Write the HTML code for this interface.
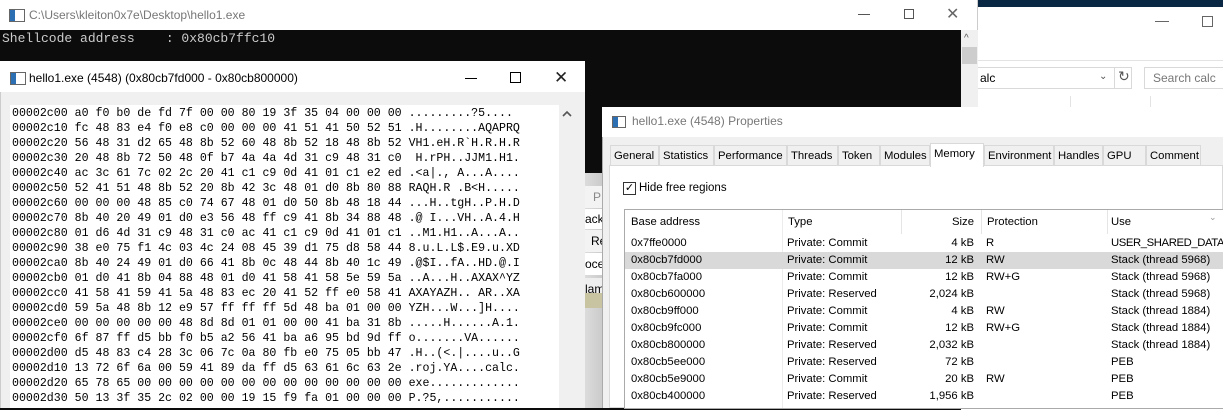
<!DOCTYPE html>
<html><head><meta charset="utf-8"><style>
*{margin:0;padding:0;box-sizing:border-box}
body{width:1223px;height:408px;overflow:hidden;position:relative;background:#fff;font-family:"Liberation Sans",sans-serif;font-size:12px}
.a{position:absolute}
.ico{position:absolute;width:16px;height:13px;border:1px solid #666;background:linear-gradient(90deg,#2c6fb3 0 5px,#fff 5px)}
.mono{font-family:"Liberation Mono",monospace}
pre{font-family:"Liberation Mono",monospace;font-size:11.6px;line-height:15px;color:#000}
.tab{position:absolute;top:145px;height:21px;border:1px solid #d9d9d9;border-bottom:none;background:#f0f0f0;font-size:11.3px;line-height:20px;padding-left:3px;color:#000;white-space:nowrap;overflow:hidden}
.row{position:absolute;left:625px;width:600px;height:17px;line-height:17px;font-size:11.3px;white-space:nowrap}
.row span{position:absolute}
</style></head><body>
<!-- explorer behind -->
<div class="a" style="left:978px;top:0;width:245px;height:7px;background:#0a2744"></div>
<div class="a" style="left:1155px;top:21px;width:14px;height:1px;background:#666"></div>
<div class="a" style="left:1202px;top:16px;width:11px;height:11px;border:1px solid #666"></div>
<div class="a" style="left:978px;top:60px;width:245px;height:1px;background:#e3e3e3"></div>
<div class="a" style="left:975px;top:67px;width:157px;height:22px;border:1px solid #d9d9d9;font-size:12px;line-height:20px;padding-left:4px">alc</div>
<div class="a" style="left:1099px;top:71px;color:#555;font-size:10px">&#8964;</div>
<div class="a" style="left:1114px;top:67px;width:1px;height:22px;background:#d9d9d9"></div>
<div class="a" style="left:1118px;top:68px;color:#555;font-size:14px">&#8635;</div>
<div class="a" style="left:1144px;top:67px;width:85px;height:22px;border:1px solid #d9d9d9;color:#777;font-size:12px;line-height:20px;padding-left:8px">Search calc</div>
<div class="a" style="left:1070px;top:96px;width:1px;height:12px;background:#e3e3e3"></div>
<div class="a" style="left:1150px;top:96px;width:1px;height:12px;background:#e3e3e3"></div>
<!-- console -->
<div class="a" style="left:0;top:0;width:978px;height:30px;background:#fff;border-right:1px solid #ccc"></div>
<div class="ico" style="left:9px;top:9px"></div>
<div class="a" style="left:29px;top:8px;color:#777;font-size:12px">C:\Users\kleiton0x7e\Desktop\hello1.exe</div>
<div class="a" style="left:858px;top:14px;width:12px;height:1px;background:#555"></div>
<div class="a" style="left:904px;top:9px;width:10px;height:10px;border:1px solid #555"></div>
<div class="a" style="left:946px;top:4px;color:#666;font-size:16px">&#10005;</div>
<div class="a" style="left:0;top:30px;width:961px;height:380px;background:#0c0c0c"></div>
<div class="a" style="left:961px;top:30px;width:17px;height:78px;background:#f0f0f0"></div>
<div class="a" style="left:964px;top:33px;color:#555;font-size:10px">^</div>
<div class="a" style="left:962px;top:47px;width:15px;height:17px;background:#cdcdcd"></div>
<div class="a mono" style="left:2px;top:31px;color:#ccc;font-size:13px;white-space:pre">Shellcode address    : 0x80cb7ffc10</div>
<!-- fragment behind -->
<div class="a" style="left:585px;top:173px;width:20px;height:235px;background:linear-gradient(90deg,#dcdcdc,#c8c8c8)"></div>
<div class="a" style="left:585px;top:186px;width:20px;height:22px;background:#f3f3f3;font-size:12px;color:#888;padding-left:8px;line-height:22px">P</div>
<div class="a" style="left:585px;top:209px;width:20px;height:20px;background:#fff;font-size:12px;line-height:20px">ack</div>
<div class="a" style="left:585px;top:230px;width:20px;height:22px;background:#f3f3f3;font-size:12px;padding-left:6px;line-height:22px">Re</div>
<div class="a" style="left:585px;top:253px;width:20px;height:22px;background:#fff;font-size:12px;line-height:22px">oce</div>
<div class="a" style="left:585px;top:278px;width:20px;height:22px;background:#eee;font-size:12px;line-height:22px">lam</div>
<div class="a" style="left:585px;top:293px;width:20px;height:15px;background:#c8c3a0"></div>
<!-- hex window -->
<div class="a" style="left:0;top:61px;width:585px;height:347px;background:#f0f0f0;border-left:1px solid #ccc"></div>
<div class="a" style="left:0;top:61px;width:585px;height:31px;background:#fff"></div>
<div class="ico" style="left:10px;top:72px"></div>
<div class="a" style="left:29px;top:71px;font-size:12px">hello1.exe (4548) (0x80cb7fd000 - 0x80cb800000)</div>
<div class="a" style="left:465px;top:78px;width:12px;height:1px;background:#000"></div>
<div class="a" style="left:510px;top:72px;width:11px;height:11px;border:1px solid #000"></div>
<div class="a" style="left:554px;top:68px;font-size:17px;color:#222">&#10005;</div>
<div class="a" style="left:10px;top:105px;width:549px;height:303px;background:#fff"></div>
<svg class="a" style="left:562px;top:110px" width="10" height="8"><path d="M1 6 L5 2 L9 6" fill="none" stroke="#555" stroke-width="1.6"/></svg>
<pre class="a" style="left:12px;top:106px">00002c00 a0 f0 b0 de fd 7f 00 00 80 19 3f 35 04 00 00 00 .........?5....
00002c10 fc 48 83 e4 f0 e8 c0 00 00 00 41 51 41 50 52 51 .H........AQAPRQ
00002c20 56 48 31 d2 65 48 8b 52 60 48 8b 52 18 48 8b 52 VH1.eH.R`H.R.H.R
00002c30 20 48 8b 72 50 48 0f b7 4a 4a 4d 31 c9 48 31 c0  H.rPH..JJM1.H1.
00002c40 ac 3c 61 7c 02 2c 20 41 c1 c9 0d 41 01 c1 e2 ed .&lt;a|., A...A....
00002c50 52 41 51 48 8b 52 20 8b 42 3c 48 01 d0 8b 80 88 RAQH.R .B&lt;H.....
00002c60 00 00 00 48 85 c0 74 67 48 01 d0 50 8b 48 18 44 ...H..tgH..P.H.D
00002c70 8b 40 20 49 01 d0 e3 56 48 ff c9 41 8b 34 88 48 .@ I...VH..A.4.H
00002c80 01 d6 4d 31 c9 48 31 c0 ac 41 c1 c9 0d 41 01 c1 ..M1.H1..A...A..
00002c90 38 e0 75 f1 4c 03 4c 24 08 45 39 d1 75 d8 58 44 8.u.L.L$.E9.u.XD
00002ca0 8b 40 24 49 01 d0 66 41 8b 0c 48 44 8b 40 1c 49 .@$I..fA..HD.@.I
00002cb0 01 d0 41 8b 04 88 48 01 d0 41 58 41 58 5e 59 5a ..A...H..AXAX^YZ
00002cc0 41 58 41 59 41 5a 48 83 ec 20 41 52 ff e0 58 41 AXAYAZH.. AR..XA
00002cd0 59 5a 48 8b 12 e9 57 ff ff ff 5d 48 ba 01 00 00 YZH...W...]H....
00002ce0 00 00 00 00 00 48 8d 8d 01 01 00 00 41 ba 31 8b .....H......A.1.
00002cf0 6f 87 ff d5 bb f0 b5 a2 56 41 ba a6 95 bd 9d ff o.......VA......
00002d00 d5 48 83 c4 28 3c 06 7c 0a 80 fb e0 75 05 bb 47 .H..(&lt;.|....u..G
00002d10 13 72 6f 6a 00 59 41 89 da ff d5 63 61 6c 63 2e .roj.YA....calc.
00002d20 65 78 65 00 00 00 00 00 00 00 00 00 00 00 00 00 exe.............
00002d30 50 13 3f 35 2c 02 00 00 19 15 f9 fa 01 00 00 00 P.?5,...........</pre>
<!-- properties -->
<div class="a" style="left:602px;top:107px;width:621px;height:301px;background:#f0f0f0;border-left:1px solid #aaa"></div>
<div class="a" style="left:602px;top:107px;width:621px;height:30px;background:#fff"></div>
<div class="a" style="left:612px;top:116px;width:14px;height:12px;border:1px solid #666;background:linear-gradient(90deg,#2c6fb3 0 5px,#fff 5px)"></div>
<div class="a" style="left:632px;top:114px;color:#777;font-size:12px">hello1.exe (4548) Properties</div>
<div class="tab" style="left:610px;width:49px">General</div>
<div class="tab" style="left:659px;width:55px">Statistics</div>
<div class="tab" style="left:714px;width:73px">Performance</div>
<div class="tab" style="left:787px;width:51px">Threads</div>
<div class="tab" style="left:838px;width:42px">Token</div>
<div class="tab" style="left:880px;width:50px">Modules</div>
<div class="tab" style="left:984px;width:70px">Environment</div>
<div class="tab" style="left:1054px;width:49px">Handles</div>
<div class="tab" style="left:1103px;width:43px">GPU</div>
<div class="tab" style="left:1146px;width:55px">Comment</div>
<div class="a" style="left:609px;top:165px;width:614px;height:243px;background:#fff;border:1px solid #d9d9d9"></div>
<div class="tab" style="left:930px;top:143px;width:54px;height:24px;background:#fff;border-color:#d9d9d9;line-height:20px">Memory</div>
<div class="a" style="left:623px;top:182px;width:13px;height:13px;border:1px solid #333;background:#fff;font-size:11px;line-height:11px;text-align:center">&#10003;</div>
<div class="a" style="left:639px;top:182px;font-size:11.5px">Hide free regions</div>
<div class="a" style="left:624px;top:209px;width:600px;height:200px;border:1px solid #aaa;background:#fff"></div>
<div class="a" style="left:782px;top:210px;width:1px;height:198px;background:#ececec"></div>
<div class="a" style="left:981px;top:210px;width:1px;height:24px;background:#e5e5e5"></div>
<div class="a" style="left:1107px;top:210px;width:1px;height:24px;background:#e5e5e5"></div>
<div class="a" style="left:901px;top:210px;width:1px;height:24px;background:#e5e5e5"></div>
<div class="row" style="top:214px"><span style="left:6px">Base address</span><span style="left:163px">Type</span><span style="right:251px">Size</span><span style="left:362px">Protection</span><span style="left:486px">Use</span></div>
<div class="a" style="left:1209px;top:212px;color:#999;font-size:9px">&#8964;</div>
<div class="a" style="left:625px;top:252px;width:598px;height:17px;background:#d9d9d9"></div>
<div class="row" style="top:235px"><span style="left:6px">0x7ffe0000</span><span style="left:162px">Private: Commit</span><span style="right:251px">4 kB</span><span style="left:361px">R</span><span style="left:486px;letter-spacing:-0.4px">USER_SHARED_DATA</span></div>
<div class="row" style="top:252px"><span style="left:6px">0x80cb7fd000</span><span style="left:162px">Private: Commit</span><span style="right:251px">12 kB</span><span style="left:361px">RW</span><span style="left:486px">Stack (thread 5968)</span></div>
<div class="row" style="top:269px"><span style="left:6px">0x80cb7fa000</span><span style="left:162px">Private: Commit</span><span style="right:251px">12 kB</span><span style="left:361px">RW+G</span><span style="left:486px">Stack (thread 5968)</span></div>
<div class="row" style="top:286px"><span style="left:6px">0x80cb600000</span><span style="left:162px">Private: Reserved</span><span style="right:251px">2,024 kB</span><span style="left:486px">Stack (thread 5968)</span></div>
<div class="row" style="top:303px"><span style="left:6px">0x80cb9ff000</span><span style="left:162px">Private: Commit</span><span style="right:251px">4 kB</span><span style="left:361px">RW</span><span style="left:486px">Stack (thread 1884)</span></div>
<div class="row" style="top:320px"><span style="left:6px">0x80cb9fc000</span><span style="left:162px">Private: Commit</span><span style="right:251px">12 kB</span><span style="left:361px">RW+G</span><span style="left:486px">Stack (thread 1884)</span></div>
<div class="row" style="top:337px"><span style="left:6px">0x80cb800000</span><span style="left:162px">Private: Reserved</span><span style="right:251px">2,032 kB</span><span style="left:486px">Stack (thread 1884)</span></div>
<div class="row" style="top:354px"><span style="left:6px">0x80cb5ee000</span><span style="left:162px">Private: Reserved</span><span style="right:251px">72 kB</span><span style="left:486px">PEB</span></div>
<div class="row" style="top:371px"><span style="left:6px">0x80cb5e9000</span><span style="left:162px">Private: Commit</span><span style="right:251px">20 kB</span><span style="left:361px">RW</span><span style="left:486px">PEB</span></div>
<div class="row" style="top:388px"><span style="left:6px">0x80cb400000</span><span style="left:162px">Private: Reserved</span><span style="right:251px">1,956 kB</span><span style="left:486px">PEB</span></div>
</body></html>
